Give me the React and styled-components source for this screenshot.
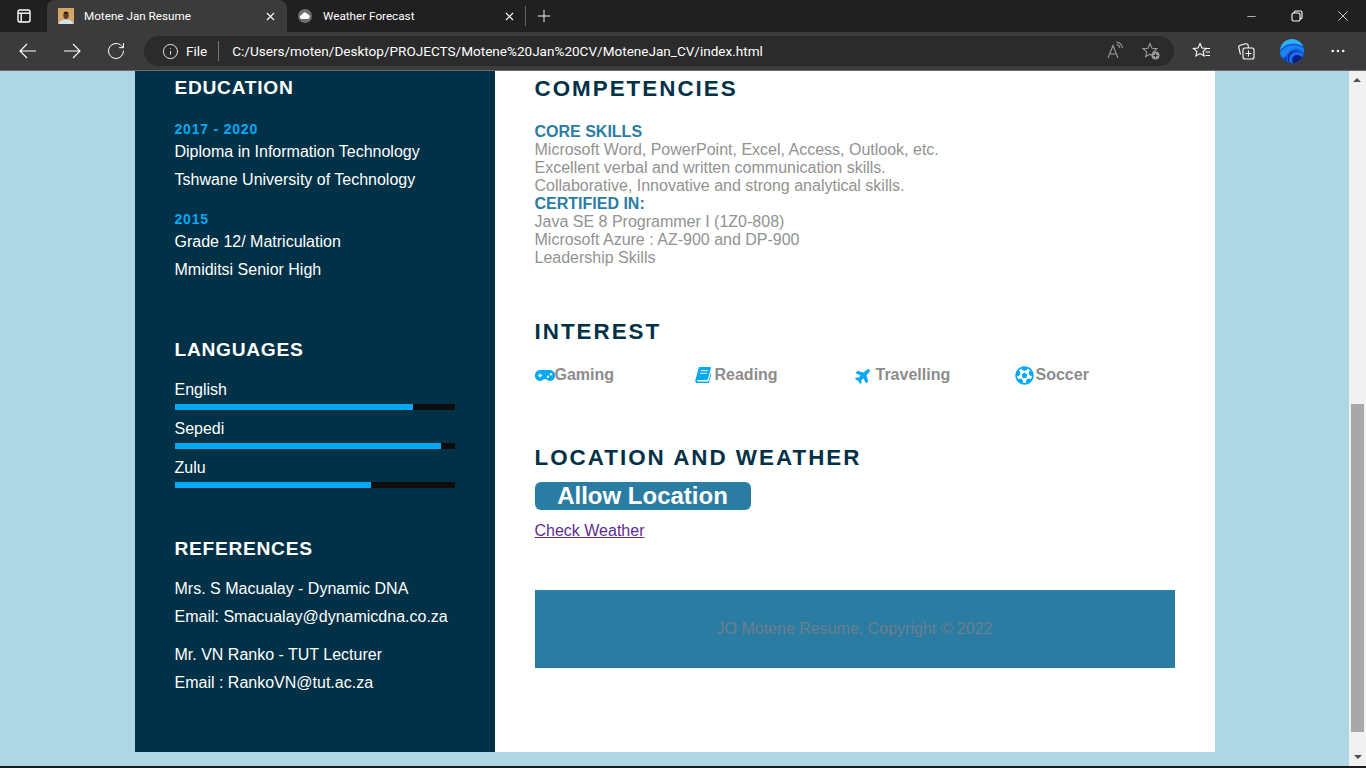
import React from "react";
import styled, { createGlobalStyle } from "styled-components";
import { FaPlane, FaFutbol } from "react-icons/fa";
import { RotateCw, Info, Plus, X, Minus, MoreHorizontal } from "lucide-react";

const GlobalStyle = createGlobalStyle`
    html, body {
        margin: 0;
        height: 768px;
        overflow: hidden;
        font-family: "Liberation Sans", Arial, sans-serif;
    }
    * { box-sizing: border-box; }
`;

const Screen = styled.div`
    display: flex;
    flex-direction: column;
    width: 1366px;
    height: 768px;
`;

/* browser chrome */
const TabStrip = styled.div`
    display: flex;
    align-items: flex-end;
    height: 32px;
    flex-shrink: 0;
    background-color: #202020;
    color: #fff;
    font-family: Roboto, "Open Sans", sans-serif;
    font-size: 11.7px;
`;

const StripButton = styled.div`
    display: flex;
    align-items: center;
    justify-content: center;
    width: ${(p) => p.$w || 44}px;
    height: 32px;
    flex-shrink: 0;
`;

const Tab = styled.div`
    display: flex;
    align-items: center;
    width: ${(p) => p.$w}px;
    height: 32px;
    padding: 0 ${(p) => p.$padRight}px 0 ${(p) => p.$pad}px;
    flex-shrink: 0;
    border-radius: 8px 8px 0 0;
    background-color: ${(p) => (p.$active ? "#3b3b3b" : "transparent")};
`;

const TabTitle = styled.span`
    flex: 1;
    margin-left: ${(p) => p.$gap}px;
    white-space: nowrap;
`;

const Favicon = styled.div`
    width: 16px;
    height: 16px;
    flex-shrink: 0;
    display: flex;
`;

const TabDivider = styled.div`
    width: 1px;
    height: 20px;
    margin: 0 0 6px 0;
    background-color: #666;
`;

const WindowButtons = styled.div`
    display: flex;
    margin-left: auto;
`;

const Toolbar = styled.div`
    display: flex;
    align-items: center;
    height: 39px;
    flex-shrink: 0;
    padding-left: 6px;
    background-color: #3b3b3b;
    border-bottom: 1px solid #6a6a6a;
    color: #fff;
    font-family: Roboto, "Open Sans", sans-serif;
    font-size: 13.55px;
`;

const ToolButton = styled.div`
    display: flex;
    align-items: center;
    justify-content: center;
    width: ${(p) => p.$w || 44}px;
    height: 30px;
    flex-shrink: 0;
    color: ${(p) => (p.$dim ? "#9a9a9a" : "#fff")};
`;

const AddressBar = styled.div`
    display: flex;
    align-items: center;
    width: 1030px;
    height: 30px;
    margin-left: 6px;
    padding-left: 18px;
    flex-shrink: 0;
    border-radius: 15px;
    background-color: #2b2b2b;
`;

const FileLabel = styled.span`
    margin-left: 7px;
    padding-right: 11px;
    border-right: 1px solid #777;
    line-height: 20px;
`;

const Url = styled.span`
    flex: 1;
    margin-left: 13px;
    white-space: nowrap;
`;

const AddressActions = styled.div`
    display: flex;
    padding-right: 5px;
`;

/* page */
const Viewport = styled.div`
    display: flex;
    flex: 1;
    min-height: 0;
    background-color: #aed7e5;
`;

const PageArea = styled.div`
    flex: 1;
    overflow: hidden;
`;

const Resume = styled.div`
    display: flex;
    width: 1080px;
    margin: 0 auto;
    background-color: #fff;
`;

const Sidebar = styled.div`
    width: 360px;
    padding: 6px 40px 56px;
    background-color: #003147;
    color: #fff;
    font-size: 16px;
`;

const SideTitle = styled.h3`
    height: 20px;
    margin: ${(p) => p.$top || 0}px 0 0;
    font-size: 19.2px;
    line-height: 22px;
    font-weight: 700;
    letter-spacing: 0.7px;
`;

const Year = styled.div`
    margin-top: ${(p) => p.$top}px;
    font-size: 14px;
    line-height: 16px;
    font-weight: 700;
    letter-spacing: 0.8px;
    color: #03a9f4;
`;

const SideLine = styled.div`
    height: 28px;
    margin-top: ${(p) => p.$top || 0}px;
    line-height: 30px;
    white-space: nowrap;
`;

const LangName = styled.div`
    height: 18px;
    margin-top: ${(p) => p.$top}px;
    margin-bottom: 6px;
    line-height: 20px;
`;

const Bar = styled.div`
    width: 100%;
    height: 6px;
    background-color: #0d0d0d;
`;

const BarFill = styled.div`
    height: 100%;
    background-color: #03a9f4;
`;

const Main = styled.div`
    width: 720px;
    padding: 6px 40px 0;
    color: #929292;
    font-size: 16px;
    line-height: 18px;
`;

const MainTitle = styled.h2`
    margin: ${(p) => p.$top || 0}px 0 0;
    font-size: 22.4px;
    line-height: 24px;
    font-weight: 700;
    letter-spacing: 2px;
    color: #003147;
`;

const SkillList = styled.div`
    margin-top: 22px;
`;

const SkillHead = styled.div`
    font-weight: 700;
    color: #2a7ca3;
`;

const InterestRow = styled.div`
    display: grid;
    grid-template-columns: repeat(4, 160px);
    margin-top: 22px;
    font-weight: 700;
`;

const Interest = styled.div`
    display: flex;
    align-items: center;
    height: 18px;
    color: #8c8c8c;
    svg {
        color: #03a9f4;
        flex-shrink: 0;
        margin-right: ${(p) => p.$gap}px;
    }
`;

const AllowButton = styled.div`
    width: 216px;
    height: 28px;
    margin-top: 12px;
    border-radius: 6px;
    background-color: #2a7ca3;
    color: #fff;
    font-size: 24px;
    line-height: 28px;
    font-weight: 700;
    text-align: center;
`;

const WeatherLink = styled.a`
    display: block;
    margin-top: 12px;
    color: #5c2d91;
    text-decoration: underline;
`;

const Footer = styled.div`
    display: flex;
    align-items: center;
    justify-content: center;
    height: 78px;
    margin-top: 50px;
    background-color: #2a7ca3;
    color: #6d7f8c;
`;

const Bottom = styled.div`
    height: 14px;
`;

const Scrollbar = styled.div`
    display: flex;
    flex-direction: column;
    align-items: center;
    width: 17px;
    flex-shrink: 0;
    padding-top: 333px;
    background-color: #f1f1f1;
    position: relative;
`;

const Thumb = styled.div`
    width: 13px;
    height: 328px;
    background-color: #a8a8a8;
`;

const ArrowDown = styled.div`
    margin-top: 23px;
    width: 0;
    height: 0;
    border-left: 4px solid transparent;
    border-right: 4px solid transparent;
    border-top: 4px solid #505050;
`;

const ArrowUp = styled(ArrowDown)`
    position: absolute;
    top: 7px;
    left: 4px;
    margin: 0;
    border-top: 0;
    border-bottom: 4px solid #505050;
`;

const TaskEdge = styled.div`
    height: 2px;
    flex-shrink: 0;
    background-color: #1c1c1c;
`;

const langs = [
    { name: "English", pct: 85, top: 21 },
    { name: "Sepedi", pct: 95, top: 9 },
    { name: "Zulu", pct: 70, top: 9 },
];

const stroke = { fill: "none", stroke: "currentColor", strokeWidth: 1.1 };

function SidebarToggle() {
    return (
        <svg width="16" height="16" viewBox="0 0 16 16" {...stroke} strokeWidth="1.4">
            <rect x="2" y="2" width="12" height="12" rx="2" />
            <path d="M2 5.2h12" />
            <path d="M5.2 5.2V14" />
        </svg>
    );
}

function RestoreIcon() {
    return (
        <svg width="12" height="12" viewBox="0 0 12 12" {...stroke}>
            <rect x="1" y="3" width="8" height="8" rx="1.5" />
            <path d="M3.2 3V2.4A1.4 1.4 0 0 1 4.6 1h4.8A1.6 1.6 0 0 1 11 2.6v4.8A1.4 1.4 0 0 1 9.6 8.8H9" />
        </svg>
    );
}

function BackArrow({ flip }) {
    return (
        <svg width="18" height="16" viewBox="0 0 18 16" {...stroke} style={flip ? { transform: "scaleX(-1)" } : undefined}>
            <path d="M1 8h16M8 1 1 8l7 7" />
        </svg>
    );
}

function Portrait() {
    return (
        <svg width="16" height="16" viewBox="0 0 16 16">
            <rect width="16" height="16" fill="#d9a566" />
            <path d="M1 16c0-3 3-4.500 7-4.500s7 1.500 7 4.500z" fill="#cfe0ee" />
            <ellipse cx="8" cy="7.500" rx="2.600" ry="3.500" fill="#5b3a26" />
            <path d="M5.400 5.500C5.600 3 10.400 3 10.600 5.500z" fill="#1c1410" />
        </svg>
    );
}

function CloudFavicon() {
    return (
        <svg width="16" height="16" viewBox="0 0 16 16">
            <circle cx="8" cy="8" r="7" fill="#6e6e6e" />
            <path d="M5 11a2 2 0 0 1-.2-4A3 3 0 0 1 10.500 6.300 2.400 2.400 0 0 1 11 11z" fill="#fff" />
        </svg>
    );
}

function ReadAloud() {
    return (
        <svg width="20" height="20" viewBox="0 0 20 20" {...stroke}>
            <path d="M3 17 8 4.500 13 17M4.800 13h6.400" />
            <path d="M11.500 3.500c2 .4 3 1.400 3.400 3.400M11.500 1c3.500.6 5.400 2.500 6 6" />
        </svg>
    );
}

function StarAdd() {
    return (
        <svg width="20" height="20" viewBox="0 0 20 20">
            <path d="M9 2.500 11 7.300l5 .4-3.800 3.200 1.200 4.800L9 13.200l-4.400 2.500 1.200-4.800L2 7.700l5-.4z" fill="none" stroke="currentColor" strokeWidth="1.100" />
            <circle cx="14.500" cy="14.500" r="4" fill="#9a9a9a" />
            <path d="M14.500 12.500v4M12.500 14.500h4" stroke="#2b2b2b" strokeWidth="1" />
        </svg>
    );
}

function Favorites() {
    return (
        <svg width="20" height="20" viewBox="0 0 20 20" {...stroke}>
            <path d="M8 2.500 10 7l4.600.4-3.500 3 1 4.600-4.100-2.400L3.900 15l1-4.600-3.500-3L6 7z" />
            <path d="M13.500 7.500H18M13.500 11H18M13.500 14.500H18" />
        </svg>
    );
}

function Collections() {
    return (
        <svg width="20" height="20" viewBox="0 0 20 20" {...stroke}>
            <rect x="7" y="7" width="11" height="11" rx="2" />
            <path d="M12.500 9.500v6M9.500 12.500h6" />
            <path d="M4.500 13.500 2.800 6.500c-.3-1.200.3-2 1.400-2.300l5.500-1.400c1.300-.3 2.100.2 2.400 1.400L12.500 7" />
        </svg>
    );
}

function ProfileOrb() {
    return (
        <svg width="24" height="24" viewBox="0 0 24 24">
            <defs>
                <clipPath id="orbClip">
                    <circle cx="12" cy="12" r="12" />
                </clipPath>
            </defs>
            <g clipPath="url(#orbClip)">
                <rect width="24" height="24" fill="#0f5fe0" />
                <path d="M0 0h24v8C17 3 7 3 0 11z" fill="#2fb0f2" />
                <path d="M0 14C5 6 15 4 24 10v3C18 8 12 9 9 13S4 19 0 18z" fill="#1c86f0" />
                <path d="M9 24c-3-6 0-12 6-12 4 0 7 2 9 5v7z" fill="#0a1f80" />
                <path d="M13 24c-2-4 0-8 4-8 3 0 5 2 7 4v-4c-3-3-7-4-10-3-5 2-6 7-4 11z" fill="#1a6ff0" />
                <path d="M0 22c3 0 5-2 6-5l1 7H0z" fill="#0c3bb5" />
            </g>
        </svg>
    );
}

function GamepadIcon() {
    return (
        <svg width="20" height="11" viewBox="0 0 20 11">
            <path d="M5 0h10a5 5 0 0 1 5 5.500A5 5 0 0 1 15 11c-1.500 0-2.500-.6-3.300-1.700H8.300C7.500 10.400 6.500 11 5 11A5 5 0 0 1 0 5.500 5 5 0 0 1 5 0z" fill="currentColor" />
            <path d="M3.200 5.500h4M5.200 3.500v4" stroke="#fff" strokeWidth="1.300" />
            <circle cx="13" cy="6.700" r="1.200" fill="#fff" />
            <circle cx="16" cy="4.300" r="1.200" fill="#fff" />
        </svg>
    );
}

function BookIcon() {
    return (
        <svg width="16" height="16" viewBox="0 0 16 16">
            <path d="M4 0h11.200c.6 0 .9.500.7 1.100L12.900 12c-.2.700-.7 1-1.400 1H3c-.8 0-1 .4-.9.800.1.500.6.800 1.300.8h9.200c.5 0 .9-.3 1.100-.8l2.500-9 .7.400-2.600 9.500c-.3 1.100-1.200 1.800-2.300 1.800H2.800C1.200 16.500 0 15 .3 13.300z" fill="currentColor" />
            <path d="M5.800 3.600h7M5 6.300h7" stroke="#fff" strokeWidth="0.900" />
        </svg>
    );
}

export default function App() {
    return (
        <Screen>
            <GlobalStyle />
            <TabStrip>
                <StripButton $w={47}><SidebarToggle /></StripButton>
                <Tab $active $w={240} $pad={11} $padRight={10}>
                    <Favicon><Portrait /></Favicon>
                    <TabTitle $gap={10}>Motene Jan Resume</TabTitle>
                    <X size={13} />
                </Tab>
                <Tab $w={238} $pad={10} $padRight={9}>
                    <Favicon><CloudFavicon /></Favicon>
                    <TabTitle $gap={10}>Weather Forecast</TabTitle>
                    <X size={13} />
                </Tab>
                <TabDivider />
                <StripButton $w={35}><Plus size={20} strokeWidth={1.1} /></StripButton>
                <WindowButtons>
                    <StripButton $w={46}><Minus size={13} strokeWidth={1.2} /></StripButton>
                    <StripButton $w={46}><RestoreIcon /></StripButton>
                    <StripButton $w={46}><X size={18} strokeWidth={1} /></StripButton>
                </WindowButtons>
            </TabStrip>
            <Toolbar>
                <ToolButton><BackArrow /></ToolButton>
                <ToolButton><BackArrow flip /></ToolButton>
                <ToolButton><RotateCw size={20} strokeWidth={1.2} /></ToolButton>
                <AddressBar>
                    <Info size={17} strokeWidth={1.2} />
                    <FileLabel>File</FileLabel>
                    <Url>C:/Users/moten/Desktop/PROJECTS/Motene%20Jan%20CV/MoteneJan_CV/index.html</Url>
                    <AddressActions>
                        <ToolButton $w={36} $dim><ReadAloud /></ToolButton>
                        <ToolButton $w={36} $dim><StarAdd /></ToolButton>
                    </AddressActions>
                </AddressBar>
                <ToolButton $w={56}><Favorites /></ToolButton>
                <ToolButton $w={32}><Collections /></ToolButton>
                <ToolButton $w={60}><ProfileOrb /></ToolButton>
                <ToolButton $w={32}><MoreHorizontal size={18} strokeWidth={1.4} /></ToolButton>
            </Toolbar>
            <Viewport>
                <PageArea>
                    <Resume>
                        <Sidebar>
                            <SideTitle>EDUCATION</SideTitle>
                            <Year $top={24}>2017 - 2020</Year>
                            <SideLine>Diploma in Information Technology</SideLine>
                            <SideLine>Tshwane University of Technology</SideLine>
                            <Year $top={18}>2015</Year>
                            <SideLine>Grade 12/ Matriculation</SideLine>
                            <SideLine>Mmiditsi Senior High</SideLine>

                            <SideTitle $top={56}>LANGUAGES</SideTitle>
                            {langs.map((lang) => (
                                <div key={lang.name}>
                                    <LangName $top={lang.top}>{lang.name}</LangName>
                                    <Bar>
                                        <BarFill style={{ width: `${lang.pct}%` }} />
                                    </Bar>
                                </div>
                            ))}

                            <SideTitle $top={50}>REFERENCES</SideTitle>
                            <SideLine $top={16}>Mrs. S Macualay - Dynamic DNA</SideLine>
                            <SideLine>Email: Smacualay@dynamicdna.co.za</SideLine>
                            <SideLine $top={10}>Mr. VN Ranko - TUT Lecturer</SideLine>
                            <SideLine>Email : RankoVN@tut.ac.za</SideLine>
                        </Sidebar>
                        <Main>
                            <MainTitle>COMPETENCIES</MainTitle>
                            <SkillList>
                                <SkillHead>CORE SKILLS</SkillHead>
                                <div>Microsoft Word, PowerPoint, Excel, Access, Outlook, etc.</div>
                                <div>Excellent verbal and written communication skills.</div>
                                <div>Collaborative, Innovative and strong analytical skills.</div>
                                <SkillHead>CERTIFIED IN:</SkillHead>
                                <div>Java SE 8 Programmer I (1Z0-808)</div>
                                <div>Microsoft Azure : AZ-900 and DP-900</div>
                                <div>Leadership Skills</div>
                            </SkillList>

                            <MainTitle $top={53}>INTEREST</MainTitle>
                            <InterestRow>
                                <Interest $gap={0}><GamepadIcon />Gaming</Interest>
                                <Interest $gap={4}><BookIcon />Reading</Interest>
                                <Interest $gap={4}><FaPlane size={17} style={{ transform: "rotate(-45deg)" }} />Travelling</Interest>
                                <Interest $gap={2}><FaFutbol size={19} />Soccer</Interest>
                            </InterestRow>

                            <MainTitle $top={62}>LOCATION AND WEATHER</MainTitle>
                            <AllowButton>Allow Location</AllowButton>
                            <WeatherLink href="#weather">Check Weather</WeatherLink>
                            <Footer>JO Motene Resume, Copyright © 2022</Footer>
                        </Main>
                    </Resume>
                    <Bottom />
                </PageArea>
                <Scrollbar>
                    <ArrowUp />
                    <Thumb />
                    <ArrowDown />
                </Scrollbar>
            </Viewport>
            <TaskEdge />
        </Screen>
    );
}
